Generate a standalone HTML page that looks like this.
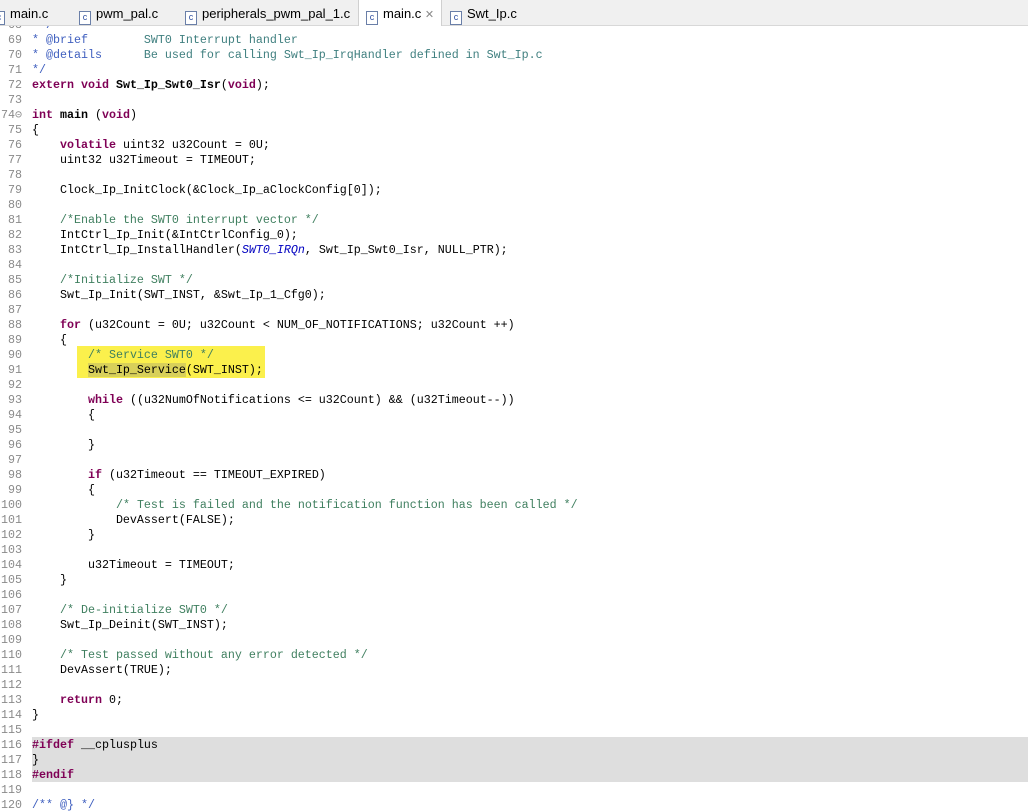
<!DOCTYPE html>
<html><head><meta charset="utf-8"><style>
body{margin:0;width:1028px;height:812px;overflow:hidden;background:#fff;position:relative;font-family:"Liberation Sans",sans-serif}
.tabs{position:absolute;left:0;top:0;width:1028px;height:25px;background:#f0f0f0;border-bottom:1px solid #d8d8d8}
.tab{position:absolute;top:0;height:25px;font-size:13px;line-height:27px;color:#000}
.tab.act{background:#fff;border-left:1px solid #d0d0d0;border-right:1px solid #d0d0d0;height:26px}
.ic{display:inline-block;width:10px;height:12px;border:1px solid #6a7fa8;font-size:9px;line-height:11px;text-align:center;color:#3050a0;vertical-align:-2px;margin-right:5px;background:#fff}
.ed{position:absolute;left:0;top:26px;width:1028px;height:786px;overflow:hidden}
.ln{position:absolute;left:0;width:1028px;height:15px;font-family:"Liberation Mono",monospace;font-size:11.67px;line-height:15px;white-space:pre}
.n{position:absolute;right:1006px;color:#8a8a8a}
.c{position:absolute;left:32px;color:#000}
.k{color:#7f0055;font-weight:bold}
.cm{color:#3f7f5f}
.dc{color:#3f5fbf}
.it{color:#0000c0;font-style:italic}
.band{position:absolute;left:32px;top:711px;width:996px;height:45px;background:#dedede}
.hl{position:absolute;left:77px;top:320px;width:188px;height:32px;background:#fbf04c}
.hl2{position:absolute;left:88px;top:337px;width:98px;height:14px;background:#d8d05a}
</style></head><body>
<div class="tabs">
<div class="tab" style="left:-7px"><span class="ic">c</span>main.c</div>
<div class="tab" style="left:79px"><span class="ic">c</span>pwm_pal.c</div>
<div class="tab" style="left:185px"><span class="ic">c</span>peripherals_pwm_pal_1.c</div>
<div class="tab act" style="left:358px;width:84px;padding-left:7px;box-sizing:border-box"><span class="ic">c</span>main.c <span style="color:#888;font-size:11px">&#x2715;</span></div>
<div class="tab" style="left:450px"><span class="ic">c</span>Swt_Ip.c</div>
</div>
<div class="ed">
<div class="band"></div>
<div class="hl"></div><div class="hl2"></div>
<div class="ln" style="top:-8px"><span class="n">68</span><span class="c dc"> */</span></div>
<div class="ln" style="top:7px"><span class="n">69</span><span class="c dc">* @brief        <span style="color:#3f7f7f">SWT0 Interrupt handler</span></span></div>
<div class="ln" style="top:22px"><span class="n">70</span><span class="c dc">* @details      <span style="color:#3f7f7f">Be used for calling Swt_Ip_IrqHandler defined in Swt_Ip.c</span></span></div>
<div class="ln" style="top:37px"><span class="n">71</span><span class="c dc">*/</span></div>
<div class="ln" style="top:52px"><span class="n">72</span><span class="c"><span class="k">extern void</span> <b>Swt_Ip_Swt0_Isr</b>(<span class="k">void</span>);</span></div>
<div class="ln" style="top:67px"><span class="n">73</span></div>
<div class="ln" style="top:82px"><span class="n">74&#x229d;</span><span class="c"><span class="k">int</span> <b>main</b> (<span class="k">void</span>)</span></div>
<div class="ln" style="top:97px"><span class="n">75</span><span class="c">{</span></div>
<div class="ln" style="top:112px"><span class="n">76</span><span class="c">    <span class="k">volatile</span> uint32 u32Count = 0U;</span></div>
<div class="ln" style="top:127px"><span class="n">77</span><span class="c">    uint32 u32Timeout = TIMEOUT;</span></div>
<div class="ln" style="top:142px"><span class="n">78</span></div>
<div class="ln" style="top:157px"><span class="n">79</span><span class="c">    Clock_Ip_InitClock(&amp;Clock_Ip_aClockConfig[0]);</span></div>
<div class="ln" style="top:172px"><span class="n">80</span></div>
<div class="ln" style="top:187px"><span class="n">81</span><span class="c">    <span class="cm">/*Enable the SWT0 interrupt vector */</span></span></div>
<div class="ln" style="top:202px"><span class="n">82</span><span class="c">    IntCtrl_Ip_Init(&amp;IntCtrlConfig_0);</span></div>
<div class="ln" style="top:217px"><span class="n">83</span><span class="c">    IntCtrl_Ip_InstallHandler(<span class="it">SWT0_IRQn</span>, Swt_Ip_Swt0_Isr, NULL_PTR);</span></div>
<div class="ln" style="top:232px"><span class="n">84</span></div>
<div class="ln" style="top:247px"><span class="n">85</span><span class="c">    <span class="cm">/*Initialize SWT */</span></span></div>
<div class="ln" style="top:262px"><span class="n">86</span><span class="c">    Swt_Ip_Init(SWT_INST, &amp;Swt_Ip_1_Cfg0);</span></div>
<div class="ln" style="top:277px"><span class="n">87</span></div>
<div class="ln" style="top:292px"><span class="n">88</span><span class="c">    <span class="k">for</span> (u32Count = 0U; u32Count &lt; NUM_OF_NOTIFICATIONS; u32Count ++)</span></div>
<div class="ln" style="top:307px"><span class="n">89</span><span class="c">    {</span></div>
<div class="ln" style="top:322px"><span class="n">90</span><span class="c">        <span class="cm">/* Service SWT0 */</span></span></div>
<div class="ln" style="top:337px"><span class="n">91</span><span class="c">        Swt_Ip_Service(SWT_INST);</span></div>
<div class="ln" style="top:352px"><span class="n">92</span></div>
<div class="ln" style="top:367px"><span class="n">93</span><span class="c">        <span class="k">while</span> ((u32NumOfNotifications &lt;= u32Count) &amp;&amp; (u32Timeout--))</span></div>
<div class="ln" style="top:382px"><span class="n">94</span><span class="c">        {</span></div>
<div class="ln" style="top:397px"><span class="n">95</span></div>
<div class="ln" style="top:412px"><span class="n">96</span><span class="c">        }</span></div>
<div class="ln" style="top:427px"><span class="n">97</span></div>
<div class="ln" style="top:442px"><span class="n">98</span><span class="c">        <span class="k">if</span> (u32Timeout == TIMEOUT_EXPIRED)</span></div>
<div class="ln" style="top:457px"><span class="n">99</span><span class="c">        {</span></div>
<div class="ln" style="top:472px"><span class="n">100</span><span class="c">            <span class="cm">/* Test is failed and the notification function has been called */</span></span></div>
<div class="ln" style="top:487px"><span class="n">101</span><span class="c">            DevAssert(FALSE);</span></div>
<div class="ln" style="top:502px"><span class="n">102</span><span class="c">        }</span></div>
<div class="ln" style="top:517px"><span class="n">103</span></div>
<div class="ln" style="top:532px"><span class="n">104</span><span class="c">        u32Timeout = TIMEOUT;</span></div>
<div class="ln" style="top:547px"><span class="n">105</span><span class="c">    }</span></div>
<div class="ln" style="top:562px"><span class="n">106</span></div>
<div class="ln" style="top:577px"><span class="n">107</span><span class="c">    <span class="cm">/* De-initialize SWT0 */</span></span></div>
<div class="ln" style="top:592px"><span class="n">108</span><span class="c">    Swt_Ip_Deinit(SWT_INST);</span></div>
<div class="ln" style="top:607px"><span class="n">109</span></div>
<div class="ln" style="top:622px"><span class="n">110</span><span class="c">    <span class="cm">/* Test passed without any error detected */</span></span></div>
<div class="ln" style="top:637px"><span class="n">111</span><span class="c">    DevAssert(TRUE);</span></div>
<div class="ln" style="top:652px"><span class="n">112</span></div>
<div class="ln" style="top:667px"><span class="n">113</span><span class="c">    <span class="k">return</span> 0;</span></div>
<div class="ln" style="top:682px"><span class="n">114</span><span class="c">}</span></div>
<div class="ln" style="top:697px"><span class="n">115</span></div>
<div class="ln" style="top:712px"><span class="n">116</span><span class="c"><span class="k">#ifdef</span> __cplusplus</span></div>
<div class="ln" style="top:727px"><span class="n">117</span><span class="c">}</span></div>
<div class="ln" style="top:742px"><span class="n">118</span><span class="c"><span class="k">#endif</span></span></div>
<div class="ln" style="top:757px"><span class="n">119</span></div>
<div class="ln" style="top:772px"><span class="n">120</span><span class="c dc">/** @} */</span></div>
</div>
</body></html>
